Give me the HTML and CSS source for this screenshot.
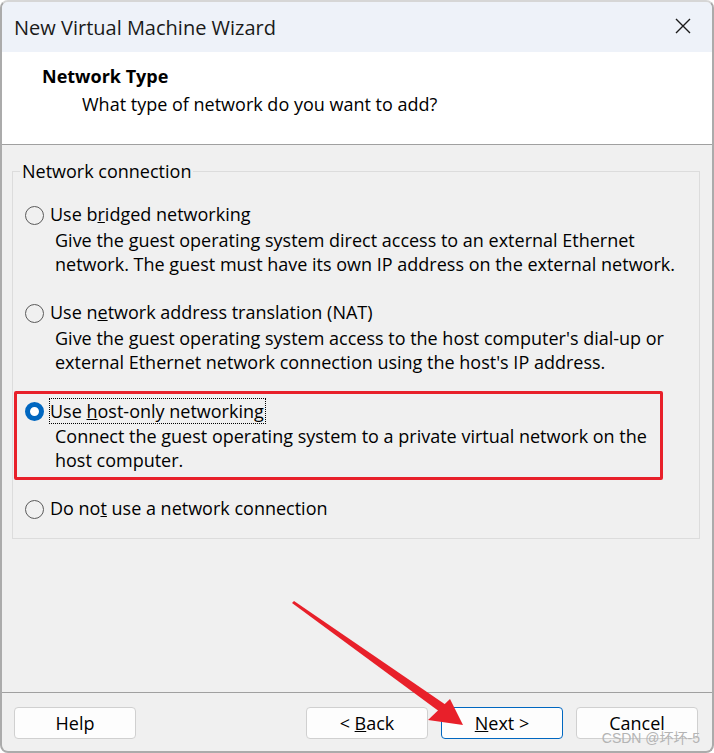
FILE: index.html
```html
<!DOCTYPE html>
<html lang="en">
<head>
  <meta charset="UTF-8" />
  <title>New Virtual Machine Wizard</title>
  <link rel="stylesheet" href="styles.css">
</head>
<body>
  <div class="window">
    <div class="titlebar">
      <span>New Virtual Machine Wizard</span>
      <svg class="close" width="16" height="16" viewBox="0 0 16 16">
        <path d="M1 1L15 15M15 1L1 15" stroke="#1a1a1a" stroke-width="1.4" fill="none"/>
      </svg>
    </div>
    <div class="header">
      <h1>Network Type</h1>
      <p>What type of network do you want to add?</p>
    </div>
    <div class="body">
      <fieldset class="group">
        <legend>Network connection</legend>
        <div class="opt">
          <div class="choice"><span class="radio"></span><span>Use b<u>r</u>idged networking</span></div>
          <div class="desc">Give the guest operating system direct access to an external Ethernet<br>network. The guest must have its own IP address on the external network.</div>
        </div>
        <div class="opt">
          <div class="choice"><span class="radio"></span><span>Use n<u>e</u>twork address translation (NAT)</span></div>
          <div class="desc">Give the guest operating system access to the host computer's dial-up or<br>external Ethernet network connection using the host's IP address.</div>
        </div>
        <div class="opt">
          <div class="choice"><span class="radio on"></span><span class="focus">Use <u>h</u>ost-only networking</span></div>
          <div class="desc">Connect the guest operating system to a private virtual network on the<br>host computer.</div>
        </div>
        <div class="opt">
          <div class="choice"><span class="radio"></span><span>Do no<u>t</u> use a network connection</span></div>
        </div>
      </fieldset>
    </div>
    <div class="footer">
      <button class="btn">Help</button>
      <div class="spacer"></div>
      <button class="btn">&lt; <u>B</u>ack</button>
      <button class="btn primary"><u>N</u>ext &gt;</button>
      <button class="btn">Cancel</button>
    </div>

    <div class="mark"></div>
    <svg class="arrow" width="714" height="753" viewBox="0 0 714 753">
      <polygon points="292,603 294,601 446,705 440,712" fill="#e8202a"/>
      <polygon points="463,725 428,720 450,699" fill="#e8202a"/>
    </svg>
    <div class="watermark">CSDN @坏坏-5</div>
  </div>
</body>
</html>
```

FILE: styles.css
```css
body {
  margin: 0;
  font-family: "Open Sans", "Noto Sans", sans-serif;
  color: #000;
}
.window {
  position: relative;
  width: 714px;
  height: 753px;
  box-sizing: border-box;
  border: 2px solid #ababab;
  border-top-color: #d6d6d6;
  border-radius: 8px;
  overflow: hidden;
  display: flex;
  flex-direction: column;
  background: #f0f0f0;
}
.titlebar {
  height: 50px;
  flex-shrink: 0;
  background: #eef2f9;
  display: flex;
  align-items: center;
  justify-content: space-between;
  padding: 0 21px 0 12px;
  font-size: 20px;
  color: #1a1a1a;
}
.close {
  margin-top: -2px;
}
.header {
  height: 92px;
  flex-shrink: 0;
  background: #fff;
  border-bottom: 1px solid #a0a0a0;
}
.header h1 {
  margin: 11px 0 0 40px;
  font-size: 18px;
  font-weight: bold;
  line-height: 26px;
}
.header p {
  margin: 2px 0 0 80px;
  font-size: 18px;
  line-height: 26px;
}
.body {
  flex: 1;
  padding: 13px 12px 0 10px;
  font-size: 18px;
}
.group {
  margin: 0;
  padding: 17px 0 0 12px;
  border: 1px solid #dcdcdc;
  line-height: 23.5px;
  height: 381px;
  box-sizing: border-box;
}
.group legend {
  padding: 0 2px;
  margin-left: -5px;
  line-height: 26px;
}
.opt {
  margin-bottom: 23px;
}
.choice {
  display: flex;
  align-items: center;
  gap: 6px;
  height: 28px;
}
.radio {
  width: 17px;
  height: 17px;
  border: 1px solid #5a5a5a;
  border-radius: 50%;
  background: #f0f0f0;
  box-sizing: content-box;
}
.radio.on {
  width: 9px;
  height: 9px;
  border: 5px solid #0067c0;
  background: #fff;
}
.focus {
  outline: 1px dotted #000;
  outline-offset: 0;
  padding-right: 1px;
  line-height: 24px;
}
.desc {
  margin-left: 30px;
  white-space: nowrap;
}
.footer {
  height: 59px;
  flex-shrink: 0;
  box-sizing: border-box;
  border-top: 1px solid #a0a0a0;
  display: flex;
  align-items: flex-start;
  gap: 13px;
  padding: 14px 14px 0 12px;
}
.spacer {
  flex: 1;
}
.btn {
  width: 122px;
  height: 32px;
  background: #fdfdfd;
  border: 1px solid #d0d0d0;
  border-radius: 4px;
  font-family: inherit;
  font-size: 18px;
  color: #000;
  padding: 0;
}
.btn.primary {
  border: 1px solid #0067c0;
}
.mark {
  position: absolute;
  left: 12px;
  top: 389px;
  width: 643px;
  height: 83px;
  border: 3px solid #e8202a;
  border-radius: 2px;
}
.arrow {
  position: absolute;
  left: -2px;
  top: -2px;
  pointer-events: none;
}
.watermark {
  position: absolute;
  right: 12px;
  bottom: 4px;
  font-family: "Liberation Sans", "Noto Sans CJK SC", sans-serif;
  font-size: 14px;
  color: #b4b4b4;
}
```
